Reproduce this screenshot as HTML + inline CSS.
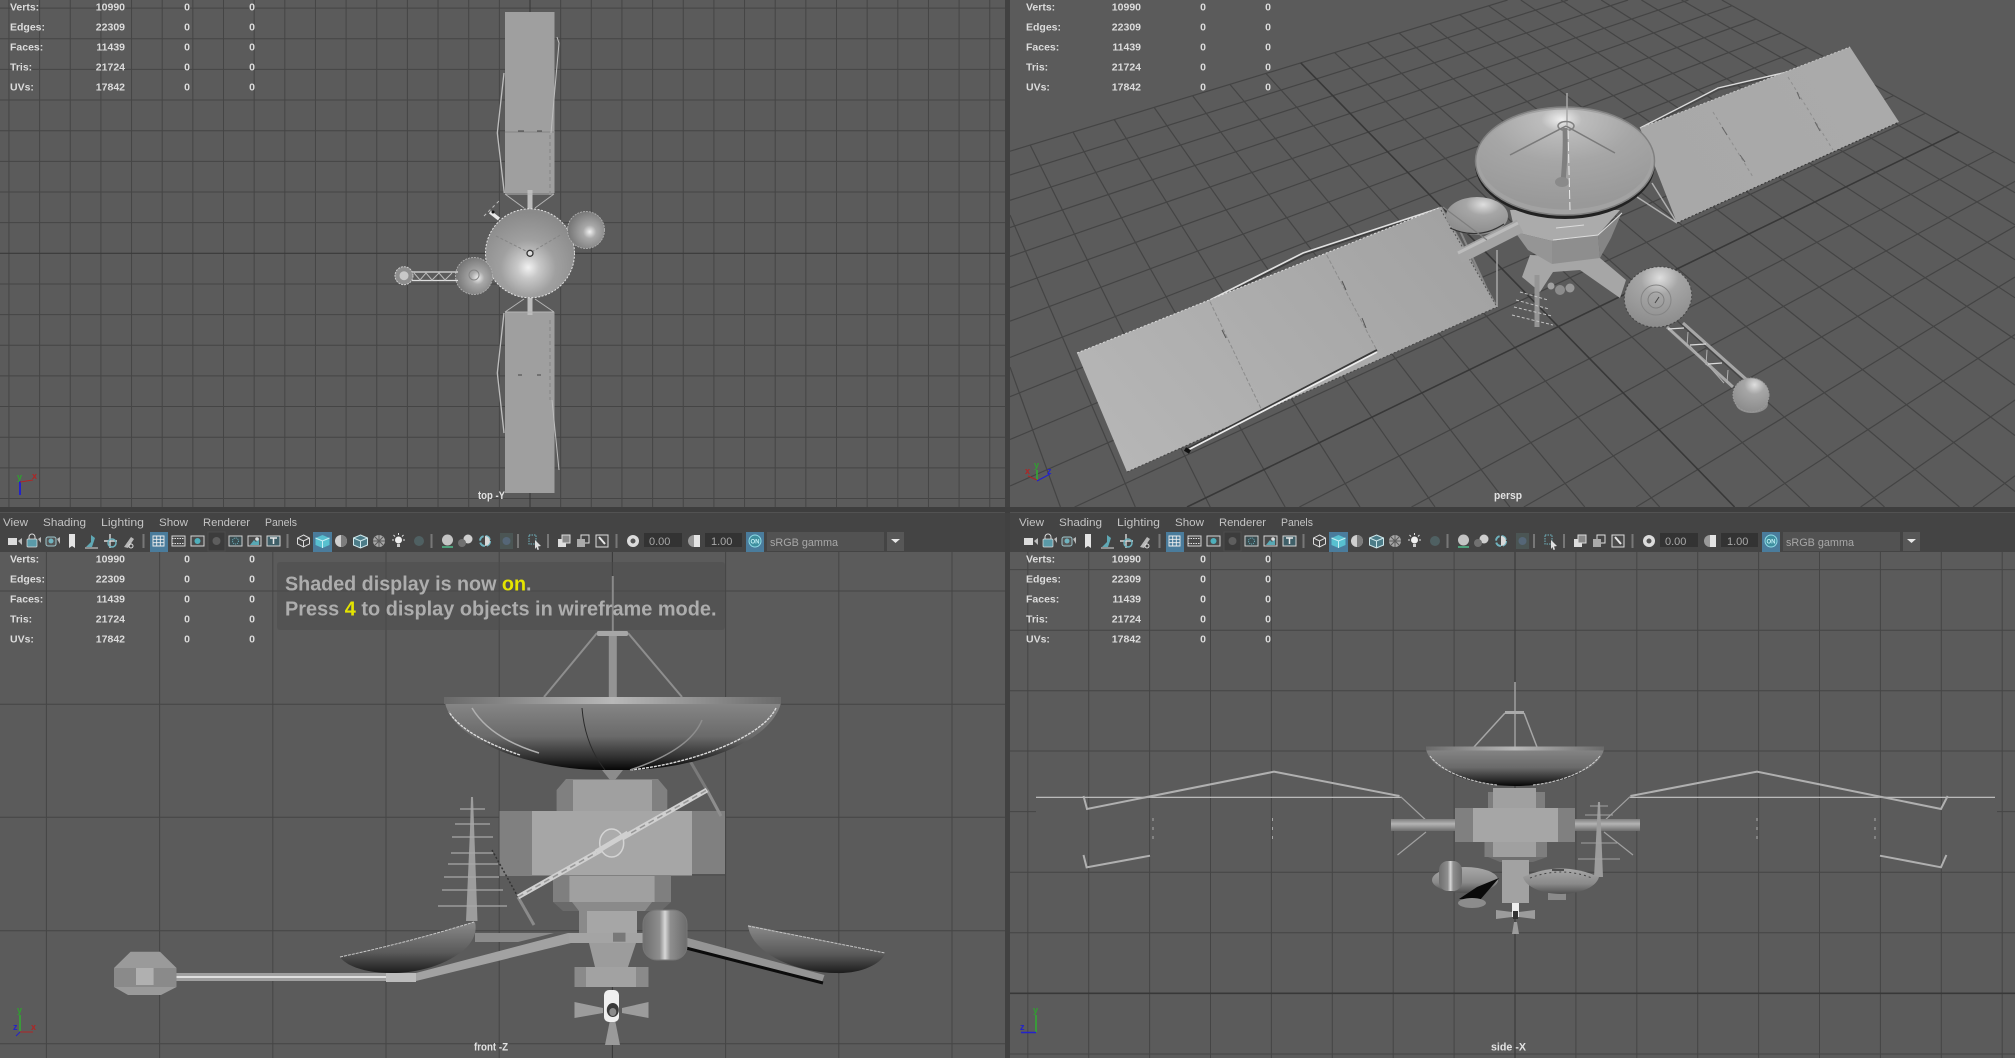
<!DOCTYPE html>
<html><head><meta charset="utf-8"><title>Maya viewports</title>
<style>
html,body{margin:0;padding:0;background:#3e3e3e;width:2015px;height:1058px;overflow:hidden}
svg{display:block}
text{font-family:"Liberation Sans",sans-serif}
.s{font-size:10.5px;font-weight:bold;fill:#dcdcdc}
.m{font-size:11px;fill:#c4c4c4}
.c{font-size:11px;font-weight:bold;fill:#e2e2e2}
.f{font-size:11px;fill:#a8a8a8}
.g{stroke:#454545;stroke-width:1;fill:none}
.gp{stroke:#444;stroke-width:1.2;fill:none}
.gc{stroke:#3a3a3a;stroke-width:1.1;fill:none}
.gd{stroke:#383838;stroke-width:1.6;fill:none}
</style></head><body>
<svg width="2015" height="1058" viewBox="0 0 2015 1058" xmlns="http://www.w3.org/2000/svg">
<defs>
<clipPath id="cTL"><rect x="0" y="0" width="1005" height="507"/></clipPath>
<clipPath id="cTR"><rect x="1010" y="0" width="1005" height="507"/></clipPath>
<clipPath id="cBL"><rect x="0" y="552" width="1005" height="506"/></clipPath>
<clipPath id="cBR"><rect x="1010" y="552" width="1005" height="506"/></clipPath>
<radialGradient id="dT" cx=".48" cy=".66" r=".62"><stop offset="0" stop-color="#f2f2f2"/><stop offset=".2" stop-color="#c8c8c8"/><stop offset=".5" stop-color="#a0a0a0"/><stop offset="1" stop-color="#8a8a8a"/></radialGradient>
<radialGradient id="dS" cx=".6" cy=".55" r=".6"><stop offset="0" stop-color="#f0f0f0"/><stop offset=".3" stop-color="#a8a8a8"/><stop offset="1" stop-color="#747474"/></radialGradient>
<linearGradient id="bowl" x1="0" y1="0" x2="0" y2="1"><stop offset="0" stop-color="#868686"/><stop offset=".5" stop-color="#6a6a6a"/><stop offset=".82" stop-color="#2e2e2e"/><stop offset="1" stop-color="#060606"/></linearGradient>
<linearGradient id="rim" x1="0" y1="0" x2="1" y2="0"><stop offset="0" stop-color="#6a6a6a"/><stop offset=".5" stop-color="#b8b8b8"/><stop offset="1" stop-color="#6a6a6a"/></linearGradient>
<linearGradient id="sd" x1="0" y1="0" x2="0" y2="1"><stop offset="0" stop-color="#8a8a8a"/><stop offset=".6" stop-color="#5a5a5a"/><stop offset="1" stop-color="#1c1c1c"/></linearGradient>
<linearGradient id="sd2" x1="0" y1="0" x2="0" y2="1"><stop offset="0" stop-color="#a8a8a8"/><stop offset=".6" stop-color="#8a8a8a"/><stop offset="1" stop-color="#505050"/></linearGradient>
<linearGradient id="caps" x1="0" y1="0" x2="1" y2="0"><stop offset="0" stop-color="#6e6e6e"/><stop offset=".38" stop-color="#8e8e8e"/><stop offset=".5" stop-color="#d8d8d8"/><stop offset=".62" stop-color="#8e8e8e"/><stop offset="1" stop-color="#6c6c6c"/></linearGradient>
<linearGradient id="tube" x1="0" y1="0" x2="0" y2="1"><stop offset="0" stop-color="#7e7e7e"/><stop offset=".4" stop-color="#b4b4b4"/><stop offset="1" stop-color="#6e6e6e"/></linearGradient>
<linearGradient id="pL" gradientUnits="userSpaceOnUse" x1="1127" y1="472" x2="1441" y2="207"><stop offset="0" stop-color="#b6b6b6"/><stop offset="1" stop-color="#a2a2a2"/></linearGradient>
<linearGradient id="pR" gradientUnits="userSpaceOnUse" x1="1640" y1="200" x2="1880" y2="60"><stop offset="0" stop-color="#a8a8a8"/><stop offset="1" stop-color="#aaaaaa"/></linearGradient>
<radialGradient id="pD" cx=".48" cy=".1" r=".85"><stop offset="0" stop-color="#f0f0f0"/><stop offset=".14" stop-color="#bcbcbc"/><stop offset=".5" stop-color="#a6a6a6"/><stop offset="1" stop-color="#999"/></radialGradient>
<radialGradient id="pA" cx=".6" cy=".2" r=".8"><stop offset="0" stop-color="#dedede"/><stop offset=".35" stop-color="#a6a6a6"/><stop offset="1" stop-color="#8c8c8c"/></radialGradient>
<g id="tb">
  <rect x="8" y="538" width="9" height="7" fill="#dcdcdc"/><path d="M18 541l4-3v7z" fill="#bcbcbc"/>
  <rect x="27" y="539" width="10" height="8" rx="1" fill="#5a9aa8" stroke="#ddd" stroke-width=".7"/><path d="M29 539v-2a3 3 0 0 1 6 0v2" stroke="#ddd" fill="none"/><path d="M38 539l3-2v6z" fill="#bbb"/>
  <rect x="46" y="537" width="10" height="9" rx="2" fill="#555" stroke="#9fc6cc"/><circle cx="51" cy="541" r="2.5" fill="#6fb3bf"/><path d="M57 539l3-2v7z" fill="#bbb"/>
  <path d="M69 534h6v14l-3-2-3 2z" fill="#e4e4e4"/>
  <path d="M86 547l5-5v-7l4 3-3 9z" fill="#5fa8b4"/><path d="M85 548h13" stroke="#ddd"/>
  <path d="M110 534v14M104 541h13" stroke="#d8d8d8" stroke-width="1.4"/><circle cx="112" cy="543" r="4" fill="none" stroke="#6fb3bf" stroke-width="1.5"/>
  <path d="M124 547l7-10 3 2-6 9z" fill="#b8b8b8"/><circle cx="131" cy="546" r="2" fill="none" stroke="#ddd"/>
  <rect x="142.500" y="534" width="2" height="14" fill="#777"/>
  <rect x="150" y="532" width="18" height="20" fill="#4a7c9c"/>
  <path d="M153 536h11v10h-11zM153 539.300h11M153 542.700h11M156.700 536v10M160.300 536v10" stroke="#eee" fill="none" stroke-width=".9"/>
  <rect x="172" y="536" width="13" height="10" fill="#4a4a4a" stroke="#d4d4d4"/><path d="M172 538.500h13M172 543.500h13" stroke="#e0e0e0" stroke-dasharray="1.500 1"/>
  <rect x="191" y="536" width="13" height="10" fill="#4a4a4a" stroke="#d4d4d4"/><circle cx="197.500" cy="541" r="3" fill="#4fb0bc"/>
  <rect x="208" y="532" width="17" height="19" fill="#3c3c3c" stroke="#4c4c4c"/><circle cx="216.500" cy="541" r="4" fill="#5e5e5e"/>
  <rect x="229" y="536" width="13" height="10" fill="#3a4c50" stroke="#cfcfcf"/><circle cx="235.500" cy="541" r="3" fill="none" stroke="#6fb3bf" stroke-dasharray="1 1"/>
  <rect x="248" y="536" width="13" height="10" fill="#4a4a4a" stroke="#d4d4d4"/><path d="M250 545l4-5 2 2 3-4v7z" fill="#58a8b4"/><circle cx="257" cy="539" r="1.800" fill="#ddd"/>
  <rect x="267" y="536" width="13" height="10" fill="#3f5f68" stroke="#d4d4d4"/><path d="M270 538h7M273.500 538v6" stroke="#e8e8e8" stroke-width="1.500"/>
  <rect x="286.500" y="534" width="2" height="14" fill="#777"/>
  <path d="M303.500 535l6 3v6l-6 3-6-3v-6zM297.500 538l6 3 6-3M303.500 541v6" fill="none" stroke="#dcdcdc"/>
  <rect x="313" y="532" width="19" height="20" fill="#4a7c9c"/>
  <path d="M322.500 535l7 3v7l-7 3-7-3v-7z" fill="#58c0d0"/><path d="M315.500 538l7 3 7-3M322.500 541v7" stroke="#c8eef4" fill="none"/>
  <circle cx="341" cy="541" r="6" fill="#cfcfcf"/><path d="M341 535a6 6 0 0 1 0 12z" fill="#7c7c7c"/>
  <path d="M360.500 535l7 3v7l-7 3-7-3v-7z" fill="#4c7c88" stroke="#cfe8ec"/><path d="M353.500 538l7 3 7-3M360.500 541v7" stroke="#cfe8ec" fill="none"/>
  <circle cx="379" cy="541" r="6" fill="#a6a6a6"/><path d="M373 541h12M379 535v12M375 537l8 8M383 537l-8 8" stroke="#5a5a5a" stroke-width="1"/>
  <circle cx="398.500" cy="540" r="3.500" fill="#f0f0f0"/><path d="M398.500 533v2M392 540h2M403 540h2M393.500 535l1.500 1.500M403.500 535l-1.500 1.500" stroke="#e0e0e0"/><rect x="397" y="544" width="3" height="3" fill="#ccc"/>
  <circle cx="419" cy="541" r="5" fill="#4f6062"/>
  <rect x="430.500" y="534" width="2" height="14" fill="#777"/>
  <circle cx="447.500" cy="540" r="5.500" fill="#c4c4c4"/><path d="M442 547h11" stroke="#4d9f7a" stroke-width="2"/>
  <circle cx="468" cy="539" r="4.500" fill="#cfcfcf"/><circle cx="462" cy="543" r="4" fill="#707070"/>
  <circle cx="485" cy="541" r="5" fill="none" stroke="#6fb3bf" stroke-width="2" stroke-dasharray="6 2"/><path d="M485 536a5 5 0 0 1 0 10z" fill="#d8d8d8"/>
  <rect x="500" y="533" width="13" height="16" fill="#4b5554"/><circle cx="506.500" cy="541" r="4" fill="#567"/>
  <rect x="517" y="534" width="2" height="14" fill="#777"/>
  <rect x="529" y="535" width="7" height="9" fill="none" stroke="#6fb3bf" stroke-dasharray="1.500 1"/><path d="M535 540l6 6-3 .5 1 3-1.500.5-1-3-1.500 2z" fill="#e0e0e0"/>
  <rect x="547" y="534" width="2" height="14" fill="#777"/>
  <rect x="558" y="539" width="8" height="8" fill="#ddd"/><rect x="562" y="535" width="8" height="8" fill="#888" stroke="#ddd"/>
  <rect x="577" y="539" width="8" height="8" fill="#aaa"/><path d="M581 539v-4h8v8h-4" fill="none" stroke="#e0e0e0"/>
  <rect x="596" y="535" width="12" height="12" fill="#4a4a4a" stroke="#ddd"/><path d="M599 537l6 7" stroke="#e8e8e8" stroke-width="2"/>
  <rect x="615.500" y="534" width="2" height="14" fill="#777"/>
  <circle cx="633" cy="541" r="6" fill="#dcdcdc"/><circle cx="633" cy="541" r="2.500" fill="#555"/>
  <rect x="644" y="533" width="38" height="14" fill="#333"/>
  <path d="M694 535a6 6 0 0 0 0 12z" fill="#999"/><rect x="694" y="535" width="6" height="12" fill="#e4e4e4"/>
  <rect x="705" y="533" width="37" height="14" fill="#333"/>
  <rect x="746" y="532" width="18" height="20" fill="#4a7c9c"/><circle cx="755" cy="541" r="6" fill="#3f8f9f" stroke="#8fdbe6"/>
  <rect x="767" y="532" width="117" height="19" fill="#525252"/>
  <rect x="887" y="532" width="17" height="19" fill="#575757"/><path d="M891 539h9l-4.500 4z" fill="#e8e8e8"/>
</g>
</defs>

<rect width="2015" height="1058" fill="#3e3e3e"/>
<rect x="0" y="0" width="1005" height="507" fill="#5b5b5b"/>
<rect x="1010" y="0" width="1005" height="507" fill="#5b5b5b"/>
<rect x="0" y="552" width="1005" height="506" fill="#5b5b5b"/>
<rect x="1010" y="552" width="1005" height="506" fill="#5b5b5b"/>

<!-- TOP GRID -->
<g clip-path="url(#cTL)">
<path class="g" d="M8.950 0V507M39.600 0V507M70.250 0V507M100.900 0V507M131.550 0V507M162.200 0V507M192.850 0V507M223.500 0V507M254.150 0V507M284.800 0V507M315.450 0V507M346.100 0V507M376.750 0V507M407.400 0V507M438.050 0V507M468.700 0V507M499.350 0V507M560.650 0V507M591.300 0V507M621.950 0V507M652.600 0V507M683.250 0V507M713.900 0V507M744.550 0V507M775.200 0V507M805.850 0V507M836.500 0V507M867.150 0V507M897.800 0V507M928.450 0V507M959.100 0V507M989.750 0V507"/>
<path class="g" d="M0 8.100H1005M0 38.750H1005M0 69.400H1005M0 100.050H1005M0 130.700H1005M0 161.350H1005M0 192H1005M0 222.650H1005M0 283.950H1005M0 314.600H1005M0 345.250H1005M0 375.900H1005M0 406.550H1005M0 437.200H1005M0 467.850H1005M0 498.500H1005"/>
<path class="gc" d="M530 0V507M0 253.300H1005"/>
<rect x="505" y="12" width="49.500" height="181" fill="#9f9f9f"/>
<rect x="505" y="312" width="49.500" height="181" fill="#9f9f9f"/>
<path d="M505 132h50" stroke="#848484"/>
<path d="M518 131h6M537 131h5M518 375h4M537 375h4" stroke="#444"/>
<path d="M504 73L497.300 133 504.300 193" fill="none" stroke="#bdbdbd" stroke-width="1.300"/>
<path d="M504 313L497.300 373 504 433" fill="none" stroke="#bdbdbd" stroke-width="1.300"/>
<path d="M557 37L559 43 551 133" fill="none" stroke="#bdbdbd"/>
<path d="M552 400L559 470" fill="none" stroke="#bdbdbd"/>
<path d="M550 135V195M550 320V400" stroke="#858585" stroke-dasharray="4 3"/>
<rect x="527.500" y="190" width="5" height="20" fill="#bdbdbd"/>
<rect x="527.500" y="298" width="5" height="17" fill="#bdbdbd"/>
<path d="M505 194L524 208M554 194L535 208M505 312L524 299M554 312L535 299M505 194H554M505 312H554" stroke="#b4b4b4" fill="none"/>
<circle cx="530" cy="253.300" r="44.500" fill="url(#dT)" stroke="#e4e4e4" stroke-dasharray="2 1.500"/>
<path d="M496 236L530 253 562 234" fill="none" stroke="#858585" stroke-dasharray="3 2"/>
<circle cx="530" cy="253.300" r="3" fill="#ddd" stroke="#333" stroke-width="1.300"/>
<path d="M490 212l9 7" stroke="#e8e8e8" stroke-width="3.500"/>
<path d="M484 216l15-15" stroke="#bbb" stroke-dasharray="3 3"/>
<circle cx="493" cy="212" r="1.500" fill="#111"/>
<circle cx="586" cy="230" r="18.500" fill="url(#dS)" stroke="#aaa" stroke-dasharray="2 1"/>
<circle cx="474" cy="276" r="18.500" fill="url(#dS)" stroke="#aaa" stroke-dasharray="2 1"/>
<circle cx="474" cy="275" r="5" fill="none" stroke="#858585"/>
<path d="M412 272H458M412 280.500H458" stroke="#dedede" stroke-width="1.300"/>
<path d="M414 273l6 7 6-7 6 7 7-7 6 7 7-7" fill="none" stroke="#bbb"/>
<circle cx="404" cy="275.700" r="9" fill="#8e8e8e" stroke="#ccc" stroke-dasharray="2 1"/>
<circle cx="404" cy="275.700" r="4.500" fill="#c8c8c8"/>
</g>

<!-- PERSP GRID -->
<g clip-path="url(#cTR)">
<path class="gp" d="M1010 151.200L1507.600 0M1010 175L1567.900 0M1010 200.300L1628.100 0M1010 227.500L1688.400 0M1010 256.500L1732.200 5.700M1010 287.700L1756.200 19M1010 321.200L1781.200 32.900M1010 357.500L1807.300 47.400M1010 396.700L1834.800 62.700M1010 439.500L1863.600 78.700M1010 486L1893.800 95.500M1074.600 507L1925.600 113.200M1299.300 507L1994.500 151.500M1411.500 507L2015 181.400M1523.800 507L2015 226.400M1636.100 507L2015 277M1748.400 507L2015 334.500M1860.600 507L2015 400M1973 507L2015 475.700"/>
<path class="gp" d="M1010 367L1060.400 507M1010 215L1135.300 507M1030.200 145.100L1210.200 507M1073 132.100L1285.100 507M1114.200 119.500L1360 507M1154.100 107.400L1435 507M1192.600 95.700L1509.900 507M1229.900 84.400L1584.800 507M1266 73.500L1659.700 507M1334.600 52.600L1809.600 507M1367.300 42.600L1884.500 507M1399 33L1959.400 507M1429.800 23.700L2015 491.500M1459.700 14.600L2015 435.500M1488.600 5.800L2015 385.100M1520.800 0L2015 339.400M1561 0L2015 297.800M1601.200 0L2015 259.700M1641.400 0L2015 224.800M1681.600 0L2015 192.700M1721.800 0L2015 163"/>
<path class="gd" d="M1187 507L1959.200 131.800M1300.700 62.800L1734.600 507"/>

<path d="M1637 197L1677 223M1652 183L1677 223" stroke="#b0b0b0" stroke-width="1.500"/>
<path d="M1640 128L1718 88 1787 72" fill="none" stroke="#484848" stroke-width="1.800" transform="translate(1 1.500)"/>
<path d="M1640 128L1718 88 1787 72" fill="none" stroke="#dcdcdc" stroke-width="1.400"/>
<polygon points="1640,128 1850,47 1899,122 1677,223" fill="url(#pR)"/>
<path d="M1677 223L1899 122" stroke="#333" stroke-width="1" stroke-dasharray="2 2"/>
<path d="M1640 128L1850 47" stroke="#c4c4c4" stroke-dasharray="2 2"/>
<path d="M1713 112L1753 177M1788 77L1833 150" stroke="#8e8e8e" stroke-width="1" stroke-dasharray="3 3"/>
<path d="M1722 127L1727 135M1740 155L1745 162M1797 92L1800 99M1815 122L1820 131" stroke="#666" stroke-width="1"/>
<path d="M1210 300L1303 253 1440 208" fill="none" stroke="#3e3e3e" stroke-width="1.800" transform="translate(1.500 1.500)"/>
<path d="M1210 300L1303 253 1440 208" fill="none" stroke="#e0e0e0" stroke-width="1.600"/>
<path d="M1441 207L1497 307M1456 222L1492 300" stroke="#888" stroke-width="2"/>
<polygon points="1441,207 1497,307 1127,472 1077,353" fill="url(#pL)"/>
<path d="M1077 353L1441 207" stroke="#dadada" stroke-dasharray="2 2"/>
<path d="M1127 472L1497 307" stroke="#444" stroke-dasharray="2 2"/>
<path d="M1210 301.700L1261.700 410M1326.700 255L1376.700 350" stroke="#8c8c8c" stroke-dasharray="4 2"/>
<path d="M1342 281L1346 290M1362 318L1366 328M1222 330L1226 338" stroke="#555" stroke-width="1"/>
<path d="M1187 451L1377 352" stroke="#3a3a3a" stroke-width="2" transform="translate(0 -2)"/>
<path d="M1188 450L1377 352" stroke="#ececec" stroke-width="1.800"/>
<path d="M1185 449l5 3" stroke="#111" stroke-width="4"/>
<path d="M1497 250V307" stroke="#a8a8a8" stroke-width="1.500"/>
<path d="M1441 210l56 97" stroke="#555" stroke-dasharray="2 2"/>
<polygon points="1522,277 1530,255 1600,258 1626,280 1620,298 1580,270 1553,272 1540,292" fill="#a6a6a6"/>
<polygon points="1510,210 1620,210 1598,235 1552,241 1515,232" fill="#ababab"/>
<polygon points="1552,241 1598,235 1600,258 1552,264" fill="#8e8e8e"/>
<polygon points="1515,232 1552,241 1552,264 1528,250" fill="#959595"/>
<polygon points="1598,235 1622,212 1611,238 1600,258" fill="#858585"/>
<path d="M1553 240L1598 235L1622 213M1556 228l28-3" stroke="#dcdcdc" fill="none"/>
<ellipse cx="1477" cy="216" rx="31" ry="19" fill="url(#pA)"/>
<path d="M1450 228q28 13 54-4" fill="none" stroke="#333" stroke-width="1.200"/>
<path d="M1520 226L1459 257" stroke="#a4a4a4" stroke-width="14"/>
<path d="M1518 223L1458 253" stroke="#bcbcbc" stroke-width="3"/>
<path d="M1443 207L1487 240" stroke="#7e7e7e" stroke-width="1.200"/>
<ellipse cx="1565" cy="164" rx="90" ry="55" fill="#222"/>
<ellipse cx="1565" cy="161" rx="89.500" ry="54" fill="#a2a2a2" stroke="#808080" stroke-width="1.500"/>
<ellipse cx="1565" cy="159.500" rx="86" ry="50" fill="url(#pD)"/>
<path d="M1566 126L1510 155M1566 126L1615 153" stroke="#7a7a7a" stroke-width="1.500"/>
<path d="M1567 93V126" stroke="#a8a8a8" stroke-width="1.500"/>
<path d="M1563 182Q1566 150 1565 128" fill="none" stroke="#7f7f7f" stroke-width="5"/>
<ellipse cx="1562" cy="182" rx="7" ry="5" fill="#8a8a8a"/>
<ellipse cx="1566" cy="126" rx="8" ry="4.500" fill="none" stroke="#808080" stroke-width="1.500"/>
<path d="M1568 130L1570 210" stroke="#ececec" stroke-dasharray="9 3"/>
<circle cx="1560" cy="290" r="5" fill="#8c8c8c"/><circle cx="1570" cy="288" r="4.500" fill="#989898"/><circle cx="1551" cy="286" r="3.500" fill="#a0a0a0"/>
<path d="M1537 275V327" stroke="#959595" stroke-width="5"/>
<path d="M1520 292l28 8M1516 300l33 9M1514 307l38 9M1512 315l41 10" stroke="#c4c4c4" stroke-dasharray="3 2"/>
<ellipse cx="1658" cy="297" rx="34" ry="30" fill="url(#pA)" stroke="#444" stroke-dasharray="2 2" transform="rotate(-15 1658 297)"/>
<circle cx="1656" cy="300" r="15" fill="none" stroke="#858585"/>
<circle cx="1656" cy="300" r="8" fill="none" stroke="#808080"/>
<path d="M1655 303l4-6" stroke="#444"/>
<path d="M1667 327L1733 387M1683 323L1747 380" stroke="#a6a6a6" stroke-width="3"/>
<path d="M1668 329l16-1M1690 345l16-1M1708 364l14-1" stroke="#dcdcdc" stroke-width="1.200"/>
<path d="M1688 332l-1 14M1707 350l-1 15M1728 370l-1 13M1670 330l18 16M1690 346l18 20M1708 365l16 18" stroke="#b0b0b0"/>
<ellipse cx="1752" cy="404" rx="16" ry="9" fill="#8e8e8e"/>
<ellipse cx="1751" cy="395" rx="18" ry="17" fill="url(#pA)" stroke="#9a9a9a" stroke-dasharray="2 1"/>
</g>

<!-- FRONT GRID -->
<g clip-path="url(#cBL)">
<path class="g" d="M46.400 552V1058M159.600 552V1058M272.800 552V1058M386 552V1058M499.200 552V1058M725.600 552V1058M838.800 552V1058M952 552V1058M0 591H1005M0 704.300H1005M0 817.300H1005M0 930.700H1005M0 1043.700H1005"/>
<path class="gc" d="M612.400 552V1058"/>
<rect x="277" y="562" width="448" height="68" rx="3" fill="#4c4c4c" fill-opacity=".55"/>
<path d="M612.800 576V633" stroke="#8a8a8a" stroke-width="2"/>
<path d="M612.800 633V697" stroke="#949494" stroke-width="8"/>
<path d="M597 633L544 697M628 633L682 697" stroke="#8e8e8e" stroke-width="2"/>
<rect x="597" y="631" width="31" height="5" rx="1.500" fill="#a6a6a6"/>
<polygon points="471,797 473,797 477.500,921 466,921 470,830" fill="#9d9d9d"/>
<path d="M460 809H485M455 824H490M452 837H493M451 853H493M448 864H498M444 877H499M442 890H503M438 906H507" stroke="#a8a8a8" stroke-width="1.200"/>
<polygon points="475,933 554,933 518,942 475,942" fill="#8c8c8c"/>
<polygon points="556.600,790 566,779 658,779 667.300,790 667.300,811 556.600,811" fill="#808080"/>
<rect x="573" y="780" width="79" height="31" fill="#a0a0a0"/>
<rect x="499.500" y="811" width="225.500" height="65" fill="#808080"/>
<rect x="532" y="811" width="160" height="64" fill="#a6a6a6"/>
<path d="M692 875H725" stroke="#444" stroke-width="1.500"/>
<rect x="553" y="876" width="118" height="26" fill="#7f7f7f"/>
<rect x="569.400" y="876" width="85.200" height="26" fill="#a0a0a0"/>
<polygon points="553,902 671,902 661,911 563,911" fill="#6a6a6a"/>
<polygon points="572,902 652,902 645,911 579,911" fill="#8a8a8a"/>
<rect x="579" y="911" width="58" height="22" fill="#8a8a8a"/>
<rect x="587" y="911" width="50" height="22" fill="#a6a6a6"/>
<polygon points="684,937 824.500,975 822,982 684,947" fill="#959595"/>
<path d="M686 948L823 983" stroke="#0c0c0c" stroke-width="3"/>
<polygon points="568,933 590,933 590,942 575,942 416,981 416,973" fill="#a2a2a2"/>
<rect x="569" y="933" width="74" height="10" fill="#a4a4a4"/>
<rect x="613" y="932.700" width="12.500" height="9" fill="#787878"/>
<polygon points="589,943 636,943 628,967 595,967" fill="#9c9c9c"/>
<rect x="574.500" y="967" width="74" height="20" fill="#8a8a8a"/>
<rect x="586" y="967" width="50" height="20" fill="#a2a2a2"/>
<rect x="643" y="910" width="44" height="50" rx="14" fill="url(#caps)" stroke="#777"/>
<rect x="386" y="973" width="30" height="9" fill="#bcbcbc"/>
<rect x="169" y="973" width="217" height="8" fill="#a0a0a0"/>
<path d="M169 977H386" stroke="#f2f2f2" stroke-width="1.600"/>
<polygon points="130.600,951.700 160,951.700 176.500,968 176.500,987 161,995 128,995 114,987 114,968" fill="#9a9a9a"/>
<polygon points="114,968 176.500,968 176.500,987 114,987" fill="#8a8a8a"/>
<rect x="136" y="968" width="17.600" height="17" fill="#b0b0b0"/>
<path d="M340 957C355 978 430 982 467 947Q478 935 475 922Q410 942 340 957Z" fill="url(#sd)"/>
<path d="M340 957Q410 942 474 922" stroke="#c8c8c8" fill="none" stroke-dasharray="3 1"/>
<path d="M748 925C750 950 790 972 835 973C860 974 880 965 885.700 953Q820 940 748 925Z" fill="url(#sd)"/>
<path d="M748 926Q820 940 885 953" stroke="#c4c4c4" fill="none" stroke-dasharray="3 1"/>
<path d="M492 850L518 897" stroke="#333" stroke-dasharray="2 2" stroke-width="1.500"/>
<path d="M518 897L534 925" stroke="#8a8a8a" stroke-width="3"/>
<path d="M679 742L707 790" stroke="#7a7a7a" stroke-width="3"/>
<path d="M707 790L721 816" stroke="#8e8e8e" stroke-width="3"/>
<path d="M518 897L707 790" stroke="#d0d0d0" stroke-width="5"/>
<path d="M518 897L707 790" stroke="#969696" stroke-width="1.500" stroke-dasharray="6 4"/>
<ellipse cx="611.700" cy="843" rx="12" ry="14" fill="#acacac" stroke="#d4d4d4" stroke-width="1.500"/>
<path d="M596 852L628 833" stroke="#d0d0d0" stroke-width="5"/>
<path d="M445 703C455 745 540 770 602 770H624C690 770 770 745 781 703Z" fill="url(#bowl)"/>
<rect x="444" y="697" width="337" height="7" fill="url(#rim)"/>
<path d="M776 708C762 738 690 764 630 770M520 755C490 745 460 730 449 712" fill="none" stroke="#dcdcdc" stroke-width="1.400" stroke-dasharray="3 1"/>
<path d="M472 708Q490 738 539 753" fill="none" stroke="#b0b0b0" stroke-width="1.500"/>
<path d="M702 720Q690 750 630 770" fill="none" stroke="#8e8e8e" stroke-width="1.500"/>
<path d="M582 708Q585 745 605 770" fill="none" stroke="#2a2a2a"/>
<polygon points="602,770 623,770 615,780 610,780" fill="#8c8c8c"/>
<polygon points="574.500,1002 574.500,1018 603,1013 603,1008" fill="#9c9c9c"/>
<polygon points="648.500,1002 648.500,1018 622,1013 622,1008" fill="#9c9c9c"/>
<polygon points="605,1045 620,1045 615,1020 610,1020" fill="#9a9a9a"/>
<rect x="604" y="990" width="15" height="32" rx="5" fill="#f0f0f0"/>
<ellipse cx="612.800" cy="1010" rx="6" ry="7" fill="#3a3a3a"/>
<ellipse cx="612.800" cy="1012" rx="3.500" ry="4" fill="#8a8a8a"/>
</g>

<!-- SIDE GRID -->
<g clip-path="url(#cBR)">
<path class="g" d="M1027.800 552V1058M1088.700 552V1058M1149.600 552V1058M1210.500 552V1058M1271.400 552V1058M1332.300 552V1058M1393.200 552V1058M1454.100 552V1058M1575.900 552V1058M1636.800 552V1058M1697.700 552V1058M1758.600 552V1058M1819.500 552V1058M1880.400 552V1058M1941.300 552V1058M2002.200 552V1058"/>
<path class="g" d="M1010 569.600H2015M1010 630.300H2015M1010 690.700H2015M1010 751H2015M1010 811.600H1036M1997 811.600H2015M1010 872.300H2015M1010 932.800H2015M1010 1054H2015"/>
<path class="gc" d="M1515 552V1058"/>
<path class="gd" d="M1010 993.300H2015"/>
<path d="M1036 797.300H1401M1630 797.300H1995" stroke="#c8c8c8" stroke-width="1.200"/>
<path d="M1083.500 796L1087 809 1274 771.700 1399.500 796" fill="none" stroke="#b0b0b0" stroke-width="2"/>
<path d="M1947.700 796L1941 809 1757 771.700 1630.400 796" fill="none" stroke="#b0b0b0" stroke-width="2"/>
<path d="M1083.500 855L1086.600 867.300 1150 855.700M1946.400 855L1941 867.300 1880 855.700" fill="none" stroke="#b0b0b0" stroke-width="2"/>
<path d="M1153 818V840M1272.500 818V840M1757 818V840M1875 818V840" stroke="#a8a8a8" stroke-dasharray="3 6"/>
<path d="M1400.700 796.700L1429 823M1426 832L1397.500 855M1630 796.700L1602 823M1604 832L1633 855" stroke="#a0a0a0" stroke-width="1.200"/>
<path d="M1515 682V747" stroke="#a0a0a0" stroke-width="1.500"/>
<path d="M1505 713L1474 747M1524 713L1537 747" stroke="#a6a6a6" stroke-width="1.500"/>
<rect x="1505" y="711" width="19" height="3" fill="#aaa"/>
<path d="M1426 749C1432 775 1480 786 1515 786C1550 786 1598 775 1604 749Z" fill="url(#bowl)"/>
<rect x="1426" y="746.500" width="178" height="4" fill="url(#rim)"/>
<path d="M1430 756C1442 772 1470 782 1497 785M1600 756C1588 772 1560 782 1533 785" fill="none" stroke="#d4d4d4" stroke-dasharray="3 1"/>
<rect x="1391" y="819" width="67" height="12" fill="url(#tube)"/>
<rect x="1573" y="819" width="67" height="12" fill="url(#tube)"/>
<rect x="1488" y="792" width="57" height="16" fill="#7e7e7e"/>
<rect x="1493" y="788" width="43" height="20" fill="#a0a0a0"/>
<rect x="1455" y="808" width="120" height="34" fill="#808080"/>
<rect x="1473" y="808" width="85" height="34" fill="#a6a6a6"/>
<rect x="1484.500" y="842" width="62.500" height="15" fill="#7e7e7e"/>
<rect x="1493" y="842" width="43" height="15" fill="#a0a0a0"/>
<polygon points="1488,857 1547,857 1533,862 1500,862" fill="#6f6f6f"/>
<rect x="1502" y="860" width="27" height="43" fill="#a2a2a2"/>
<ellipse cx="1465" cy="880" rx="33" ry="13" fill="url(#sd2)"/>
<rect x="1439" y="861" width="23" height="30" rx="9" fill="url(#caps)"/>
<polygon points="1499,878 1480,900 1459,899 1477,887" fill="#0a0a0a"/>
<ellipse cx="1472" cy="903" rx="14" ry="5" fill="#8c8c8c"/>
<rect x="1548" y="893" width="18" height="7" fill="#8a8a8a"/>
<polygon points="1598,802 1600,802 1603,877 1594,877" fill="#9c9c9c"/>
<path d="M1590 806H1608M1585 815H1613M1581 843H1617M1578 859H1620" stroke="#a2a2a2"/>
<path d="M1523 877Q1561 860 1599 877C1596 888 1578 894 1561 894C1544 894 1526 888 1523 877Z" fill="url(#sd2)"/>
<path d="M1530 878Q1561 866 1592 878" fill="none" stroke="#444" stroke-dasharray="2 3"/>
<path d="M1552 870h12" stroke="#222" stroke-width="1.300"/>
<polygon points="1496,910 1496,919 1512,917 1512,912" fill="#9c9c9c"/>
<polygon points="1535,910 1535,919 1519,917 1519,912" fill="#9c9c9c"/>
<rect x="1512" y="903" width="7" height="14" fill="#eee"/>
<rect x="1513" y="911" width="5" height="8" fill="#333"/>
<polygon points="1512,934 1519,934 1517,922 1514,922" fill="#9c9c9c"/>
</g>

<!-- separators / toolbars -->
<rect x="1005" y="0" width="5" height="1058" fill="#414141"/>
<rect x="0" y="507" width="2015" height="6" fill="#3e3e3e"/>
<rect x="0" y="512" width="1005" height="1" fill="#525252"/>
<rect x="1010" y="512" width="1005" height="1" fill="#525252"/>
<rect x="0" y="513" width="1005" height="39" fill="#444"/>
<rect x="1010" y="513" width="1005" height="39" fill="#444"/>
<use href="#tb"/>
<use href="#tb" transform="translate(1016 0)"/>

<text class="m" x="3" y="526" textLength="25" lengthAdjust="spacingAndGlyphs">View</text>
<text class="m" x="43" y="526" textLength="43" lengthAdjust="spacingAndGlyphs">Shading</text>
<text class="m" x="101" y="526" textLength="43" lengthAdjust="spacingAndGlyphs">Lighting</text>
<text class="m" x="159" y="526" textLength="29" lengthAdjust="spacingAndGlyphs">Show</text>
<text class="m" x="203" y="526" textLength="47" lengthAdjust="spacingAndGlyphs">Renderer</text>
<text class="m" x="265" y="526" textLength="32" lengthAdjust="spacingAndGlyphs">Panels</text>
<text class="m" x="1019" y="526" textLength="25" lengthAdjust="spacingAndGlyphs">View</text>
<text class="m" x="1059" y="526" textLength="43" lengthAdjust="spacingAndGlyphs">Shading</text>
<text class="m" x="1117" y="526" textLength="43" lengthAdjust="spacingAndGlyphs">Lighting</text>
<text class="m" x="1175" y="526" textLength="29" lengthAdjust="spacingAndGlyphs">Show</text>
<text class="m" x="1219" y="526" textLength="47" lengthAdjust="spacingAndGlyphs">Renderer</text>
<text class="m" x="1281" y="526" textLength="32" lengthAdjust="spacingAndGlyphs">Panels</text>

<text class="f" x="649" y="545">0.00</text>
<text class="f" x="711" y="545">1.00</text>
<text x="755" y="543.500" text-anchor="middle" font-size="6" font-weight="bold" fill="#bfeef4">ON</text>
<text class="f" x="770" y="546" textLength="68" lengthAdjust="spacingAndGlyphs">sRGB gamma</text>
<text class="f" x="1665" y="545">0.00</text>
<text class="f" x="1727" y="545">1.00</text>
<text x="1771" y="543.500" text-anchor="middle" font-size="6" font-weight="bold" fill="#bfeef4">ON</text>
<text class="f" x="1786" y="546" textLength="68" lengthAdjust="spacingAndGlyphs">sRGB gamma</text>

<text x="285" y="590.500" font-size="20" font-weight="bold" fill="#adadad" textLength="246.500" lengthAdjust="spacingAndGlyphs">Shaded display is now <tspan fill="#e4e400">on</tspan>.</text>
<text x="285" y="615.500" font-size="20" font-weight="bold" fill="#adadad" textLength="431.500" lengthAdjust="spacingAndGlyphs">Press <tspan fill="#e4e400">4</tspan> to display objects in wireframe mode.</text>

<g class="s">
<text class="s" x="10" y="10.500">Verts:</text><text class="s" x="125" y="10.500" text-anchor="end">10990</text><text class="s" x="187" y="10.500" text-anchor="middle">0</text><text class="s" x="252" y="10.500" text-anchor="middle">0</text>
<text class="s" x="10" y="30.500">Edges:</text><text class="s" x="125" y="30.500" text-anchor="end">22309</text><text class="s" x="187" y="30.500" text-anchor="middle">0</text><text class="s" x="252" y="30.500" text-anchor="middle">0</text>
<text class="s" x="10" y="50.500">Faces:</text><text class="s" x="125" y="50.500" text-anchor="end">11439</text><text class="s" x="187" y="50.500" text-anchor="middle">0</text><text class="s" x="252" y="50.500" text-anchor="middle">0</text>
<text class="s" x="10" y="70.500">Tris:</text><text class="s" x="125" y="70.500" text-anchor="end">21724</text><text class="s" x="187" y="70.500" text-anchor="middle">0</text><text class="s" x="252" y="70.500" text-anchor="middle">0</text>
<text class="s" x="10" y="90.500">UVs:</text><text class="s" x="125" y="90.500" text-anchor="end">17842</text><text class="s" x="187" y="90.500" text-anchor="middle">0</text><text class="s" x="252" y="90.500" text-anchor="middle">0</text>
</g>
<g class="s">
<text class="s" x="1026" y="10.500">Verts:</text><text class="s" x="1141" y="10.500" text-anchor="end">10990</text><text class="s" x="1203" y="10.500" text-anchor="middle">0</text><text class="s" x="1268" y="10.500" text-anchor="middle">0</text>
<text class="s" x="1026" y="30.500">Edges:</text><text class="s" x="1141" y="30.500" text-anchor="end">22309</text><text class="s" x="1203" y="30.500" text-anchor="middle">0</text><text class="s" x="1268" y="30.500" text-anchor="middle">0</text>
<text class="s" x="1026" y="50.500">Faces:</text><text class="s" x="1141" y="50.500" text-anchor="end">11439</text><text class="s" x="1203" y="50.500" text-anchor="middle">0</text><text class="s" x="1268" y="50.500" text-anchor="middle">0</text>
<text class="s" x="1026" y="70.500">Tris:</text><text class="s" x="1141" y="70.500" text-anchor="end">21724</text><text class="s" x="1203" y="70.500" text-anchor="middle">0</text><text class="s" x="1268" y="70.500" text-anchor="middle">0</text>
<text class="s" x="1026" y="90.500">UVs:</text><text class="s" x="1141" y="90.500" text-anchor="end">17842</text><text class="s" x="1203" y="90.500" text-anchor="middle">0</text><text class="s" x="1268" y="90.500" text-anchor="middle">0</text>
</g>
<g class="s">
<text class="s" x="10" y="562.500">Verts:</text><text class="s" x="125" y="562.500" text-anchor="end">10990</text><text class="s" x="187" y="562.500" text-anchor="middle">0</text><text class="s" x="252" y="562.500" text-anchor="middle">0</text>
<text class="s" x="10" y="582.500">Edges:</text><text class="s" x="125" y="582.500" text-anchor="end">22309</text><text class="s" x="187" y="582.500" text-anchor="middle">0</text><text class="s" x="252" y="582.500" text-anchor="middle">0</text>
<text class="s" x="10" y="602.500">Faces:</text><text class="s" x="125" y="602.500" text-anchor="end">11439</text><text class="s" x="187" y="602.500" text-anchor="middle">0</text><text class="s" x="252" y="602.500" text-anchor="middle">0</text>
<text class="s" x="10" y="622.500">Tris:</text><text class="s" x="125" y="622.500" text-anchor="end">21724</text><text class="s" x="187" y="622.500" text-anchor="middle">0</text><text class="s" x="252" y="622.500" text-anchor="middle">0</text>
<text class="s" x="10" y="642.500">UVs:</text><text class="s" x="125" y="642.500" text-anchor="end">17842</text><text class="s" x="187" y="642.500" text-anchor="middle">0</text><text class="s" x="252" y="642.500" text-anchor="middle">0</text>
</g>
<g class="s">
<text class="s" x="1026" y="562.500">Verts:</text><text class="s" x="1141" y="562.500" text-anchor="end">10990</text><text class="s" x="1203" y="562.500" text-anchor="middle">0</text><text class="s" x="1268" y="562.500" text-anchor="middle">0</text>
<text class="s" x="1026" y="582.500">Edges:</text><text class="s" x="1141" y="582.500" text-anchor="end">22309</text><text class="s" x="1203" y="582.500" text-anchor="middle">0</text><text class="s" x="1268" y="582.500" text-anchor="middle">0</text>
<text class="s" x="1026" y="602.500">Faces:</text><text class="s" x="1141" y="602.500" text-anchor="end">11439</text><text class="s" x="1203" y="602.500" text-anchor="middle">0</text><text class="s" x="1268" y="602.500" text-anchor="middle">0</text>
<text class="s" x="1026" y="622.500">Tris:</text><text class="s" x="1141" y="622.500" text-anchor="end">21724</text><text class="s" x="1203" y="622.500" text-anchor="middle">0</text><text class="s" x="1268" y="622.500" text-anchor="middle">0</text>
<text class="s" x="1026" y="642.500">UVs:</text><text class="s" x="1141" y="642.500" text-anchor="end">17842</text><text class="s" x="1203" y="642.500" text-anchor="middle">0</text><text class="s" x="1268" y="642.500" text-anchor="middle">0</text>
</g>

<text class="c" x="478" y="499" textLength="27" lengthAdjust="spacingAndGlyphs">top -Y</text>
<text class="c" x="1494" y="499" textLength="28" lengthAdjust="spacingAndGlyphs">persp</text>
<text class="c" x="474" y="1050.500" textLength="34" lengthAdjust="spacingAndGlyphs">front -Z</text>
<text class="c" x="1491" y="1050.500" textLength="35" lengthAdjust="spacingAndGlyphs">side -X</text>

<g font-size="9" font-weight="bold">
<path d="M20 481V495" stroke="#2222cc" stroke-width="2"/><path d="M20 482L33 480" stroke="#b02525"/>
<text x="17" y="480" fill="#30a030">y</text><text x="32" y="479" fill="#b02525">x</text>
<path d="M1037 470V480" stroke="#30b030" stroke-width="1.500"/><path d="M1037 480L1028 476" stroke="#b02525"/><path d="M1037 481L1050 474" stroke="#2222cc" stroke-width="1.200"/>
<text x="1034" y="468" fill="#30a030">y</text><text x="1025" y="474" fill="#b02525">x</text><text x="1047" y="474" fill="#2222cc">z</text>
<path d="M20 1015V1031" stroke="#30b030" stroke-width="1.500"/><path d="M20 1032H33" stroke="#b02525"/><path d="M20 1032L16 1036" stroke="#2222cc"/>
<text x="17" y="1013" fill="#30a030">y</text><text x="31" y="1030" fill="#b02525">x</text><text x="13" y="1030" fill="#2222cc">z</text>
<path d="M1036 1015V1032" stroke="#30b030" stroke-width="1.500"/><path d="M1021 1032.500H1036" stroke="#2222cc" stroke-width="1.500"/>
<text x="1033" y="1013" fill="#30a030">y</text><text x="1020" y="1030" fill="#2222cc">z</text>
</g>
</svg>
</body></html>
